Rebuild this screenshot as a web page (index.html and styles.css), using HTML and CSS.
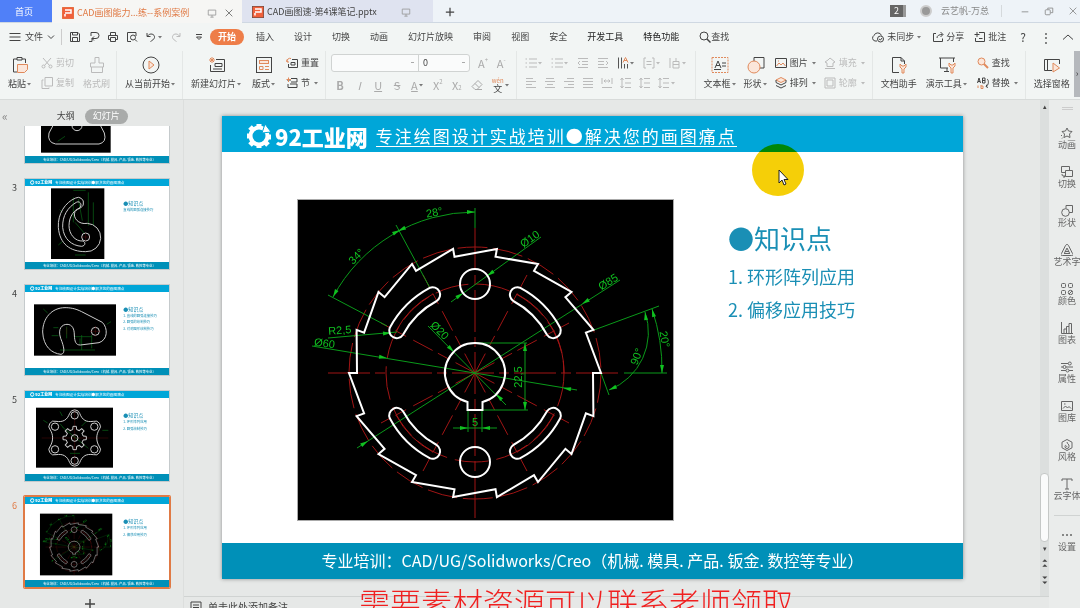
FILE: index.html
```html
<!DOCTYPE html>
<html lang="zh-CN">
<head>
  <meta charset="UTF-8">
  <meta name="viewport" content="width=device-width, initial-scale=1.0">
  <title>CAD画图能力训练</title>
  <link rel="stylesheet" href="styles.css">
</head>
<body>

<!-- icons and drawings -->
<svg class="sprite" aria-hidden="true">
  <symbol id="i-wps" viewBox="0 0 12 12"><rect width="12" height="12" rx="1" fill="#f0603c"/><path d="M3 9.500V7M3 3H9V6H3" fill="none" stroke="#fff" stroke-width="1.500"/></symbol>
  <symbol id="i-screen" viewBox="0 0 12 12"><path d="M1.500 2.500H10.500V8.500H1.500ZM6 8.500V11M4 11H8"/></symbol>
  <symbol id="i-close" viewBox="0 0 12 12"><path d="M2 2L10 10M10 2L2 10"/></symbol>
  <symbol id="i-plus" viewBox="0 0 12 12"><path d="M6 1V11M1 6H11" stroke-width="1.500"/></symbol>
  <symbol id="i-min" viewBox="0 0 12 12"><path d="M2 7H10"/></symbol>
  <symbol id="i-restore" viewBox="0 0 12 12"><rect x="1.500" y="4.500" width="6" height="6" rx="1"/><path d="M4.500 4V2.500H10.500V8H8"/></symbol>
  <symbol id="i-caret" viewBox="0 0 6 6"><path d="M1 2H5L3 4.500Z" fill="currentColor" stroke="none"/></symbol>
  <symbol id="i-down" viewBox="0 0 8 8"><path d="M1 2.500L4 5.500L7 2.500"/></symbol>
  <symbol id="i-up" viewBox="0 0 12 12"><path d="M1 8.500L6 4L11 8.500"/></symbol>
  <symbol id="i-menu" viewBox="0 0 12 12"><path d="M.5 2.500H11.500M.5 6H11.500M.5 9.500H11.500"/></symbol>
  <symbol id="i-save" viewBox="0 0 12 12"><path d="M1.500 1.500H9L10.500 3V10.500H1.500ZM3.500 10.500V6.500H8.500V10.500M3.500 1.500V4H8.500V1.500"/></symbol>
  <symbol id="i-export" viewBox="0 0 12 12"><path d="M3 1.500H8A3 3 0 0 1 8 7.500H4M6 5.500L4 7.500L6 9.500M3 1.500V5M1 10.500H4V7.500"/></symbol>
  <symbol id="i-print" viewBox="0 0 12 12"><path d="M3.500 4V1.500H8.500V4M3 8.500H1.500V4.500H10.500V8.500H9M3.500 6.500H8.500V10.500H3.500Z"/></symbol>
  <symbol id="i-preview" viewBox="0 0 12 12"><path d="M5 10.500H1.500V1.500H10V5"/><circle cx="7" cy="6.500" r="2.500"/><path d="M9 8.500L11 10.500"/></symbol>
  <symbol id="i-undo" viewBox="0 0 12 12"><path d="M2 2V5.500H5.500M2.500 5C5 1.500 10 3 9.500 6.500C9 8.500 7 9.500 5.500 10.500"/></symbol>
  <symbol id="i-redo" viewBox="0 0 12 12"><path d="M10 2V5.500H6.500M9.500 5C7 1.500 2 3 2.500 6.500C3 8.500 5 9.500 6.500 10.500"/></symbol>
  <symbol id="i-more" viewBox="0 0 8 8"><path d="M1 1.500H7M1.500 4H6.500L4 6.500Z"/></symbol>
  <symbol id="i-search" viewBox="0 0 12 12"><circle cx="5" cy="5" r="4"/><path d="M8 8L11.500 11.500" stroke-width="1.500"/></symbol>
  <symbol id="i-find" viewBox="0 0 12 12"><circle class="of" cx="4.500" cy="4.500" r="3.500"/><path class="o" d="M7 7L11 11" stroke-width="2"/></symbol>
  <symbol id="i-cloud" viewBox="0 0 14 12"><path d="M6 10H4A3 3 0 0 1 3 4.500A4 4 0 0 1 10.500 4.500"/><circle cx="9.500" cy="8" r="3"/><path d="M8 8L9.500 9L11 7"/></symbol>
  <symbol id="i-share" viewBox="0 0 12 12"><path d="M4 2.500H1.500V10.500H10.500V7.500M5 7C5 4.500 7 3.500 10.500 3.500M8.500 1L11 3.500L8.500 6"/></symbol>
  <symbol id="i-comment" viewBox="0 0 12 12"><path d="M5 1.500H10.500V10.500H1.500V7M3 1V6M.5 3.500H5.500M5 7.500H8.500"/></symbol>
  <symbol id="i-paste" viewBox="0 0 18 18"><path d="M6 16H2.500V3H6M11 3H14.500V7M6 1.500H11V4H6Z"/><path class="of" d="M6.500 8.500H16.500V13.500L13.500 16.500H6.500Z"/></symbol>
  <symbol id="i-cut" viewBox="0 0 12 12"><path d="M2 1L8.500 8.500M10 1L3.500 8.500"/><circle cx="2.500" cy="9.500" r="1.500"/><circle cx="9.500" cy="9.500" r="1.500"/></symbol>
  <symbol id="i-copy" viewBox="0 0 12 12"><path d="M4 .5H11.500V9H4ZM2.500 3H1V11.500H8V10.500"/></symbol>
  <symbol id="i-brush" viewBox="0 0 18 18"><path d="M7 1.500H11V7H15.500V11H2.500V7H7ZM3.500 11V16.500H14.500V11"/></symbol>
  <symbol id="i-play" viewBox="0 0 18 18"><circle cx="9" cy="9" r="8"/><path class="of" d="M7 5L12 9L7 13Z"/></symbol>
  <symbol id="i-newslide" viewBox="0 0 18 18"><path d="M8 3.500H16.500V15.500H2.500V9M5 13H14"/><path d="M7 7.500H14V10.500H7Z"/><path class="o" d="M4 1V7M1 4H7M2 2L6 6M6 2L2 6"/></symbol>
  <symbol id="i-layout" viewBox="0 0 18 18"><rect x="1.500" y="1.500" width="15" height="15"/><rect class="of" x="4.500" y="4.500" width="9" height="3"/><path class="o" d="M4.500 10.500H8V13.500H4.500ZM10 10.500H14M10 13.500H14"/></symbol>
  <symbol id="i-reset" viewBox="0 0 12 12"><path d="M6 2.500H11.500V10.500H2.500V7M5 5.500H9V8H5Z"/><path class="o" d="M1 5A3 3 0 0 1 5 1.500M1 2.500V5H3"/></symbol>
  <symbol id="i-section" viewBox="0 0 12 12"><path d="M5 1.500H11V5H5M2 7V10.500H11V7H4M5 3H1"/><path class="o" d="M2.500 .5V5M.5 2.500H5"/></symbol>
  <symbol id="i-eraser" viewBox="0 0 12 12"><path d="M7 1.500L11 5.500L6 10.500H4L1 7.500ZM4 4.500L8 8.500M6 10.500H11"/></symbol>
  <symbol id="i-bullets" viewBox="0 0 12 12"><path d="M4 2H12M4 6H12M4 10H12M.5 2H2M.5 6H2M.5 10H2"/></symbol>
  <symbol id="i-outdent" viewBox="0 0 12 12"><path d="M1 1.500H11M5 4.500H11M5 7.500H11M1 10.500H11M3 4L1 6L3 8"/></symbol>
  <symbol id="i-indent" viewBox="0 0 12 12"><path d="M1 1.500H11M1 4.500H7M1 7.500H7M1 10.500H11M9 4L11 6L9 8"/></symbol>
  <symbol id="i-textdir" viewBox="0 0 12 12"><path d="M1.500 .5V11.500M4.500 .5V11.500M7.500 7V11.500M10.500 7V11.500"/><path class="o" d="M6 5.500L8.500 .5L11 5.500M7 3.500H10"/></symbol>
  <symbol id="i-valign" viewBox="0 0 12 12"><path d="M3 1H1V11H3M9 1H11V11H9M3.500 4.500H8.500M3.500 7.500H8.500"/></symbol>
  <symbol id="i-smart" viewBox="0 0 12 12"><path d="M1 1V11M4 4.500H10V11H4ZM7 1V4M4 7.500H10"/></symbol>
  <symbol id="i-left" viewBox="0 0 12 12"><path d="M1 1.500H8M1 4.500H11M1 7.500H7M1 10.500H11"/></symbol>
  <symbol id="i-center" viewBox="0 0 12 12"><path d="M2 1.500H10M1 4.500H11M3 7.500H9M1 10.500H11"/></symbol>
  <symbol id="i-right" viewBox="0 0 12 12"><path d="M4 1.500H11M1 4.500H11M5 7.500H11M1 10.500H11"/></symbol>
  <symbol id="i-justify" viewBox="0 0 12 12"><path d="M1 1.500H11M1 4.500H11M1 7.500H11M1 10.500H11"/></symbol>
  <symbol id="i-spread" viewBox="0 0 12 12"><path d="M1 1V7M11 1V7M3 4H9M4.500 2.500L3 4L4.500 5.500M7.500 2.500L9 4L7.500 5.500M1 10.500H11"/></symbol>
  <symbol id="i-lines" viewBox="0 0 12 12"><path d="M5 1.500H11M5 6H11M5 10.500H11M2 1V11M.5 3L2 1L3.500 3M.5 9L2 11L3.500 9"/></symbol>
  <symbol id="i-textbox" viewBox="0 0 18 18"><rect class="o" x="1" y="1.500" width="16" height="15" stroke-dasharray="2 1"/><path d="M4 12L7 5L10 12M5 9.500H9M11 7H15M11 10H15M3 13.500H10"/></symbol>
  <symbol id="i-shape" viewBox="0 0 18 18"><path d="M7 6V1.500H17V12H13"/><circle class="of" cx="7" cy="11" r="6"/></symbol>
  <symbol id="i-picture" viewBox="0 0 12 12"><path d="M.5 1.500H11.500V10.500H.5Z"/><path class="o" d="M1.500 9L4 6L6 8L8 6L10.500 9M3 4H4"/></symbol>
  <symbol id="i-arrange" viewBox="0 0 12 12"><path class="of" d="M6 .5L11 3L6 5.500L1 3Z"/><path d="M1 5.500L6 8L11 5.500M1 8.500L6 11L11 8.500M1 3V5.500M11 3V5.500"/></symbol>
  <symbol id="i-fill" viewBox="0 0 12 12"><path d="M4 3L6 1L11 5L9 6V9.500H3V6L1 5ZM1 11.500H11"/></symbol>
  <symbol id="i-outline" viewBox="0 0 12 12"><path d="M1 1H11V11H1ZM3 3H9V9H3Z"/></symbol>
  <symbol id="i-dochelp" viewBox="0 0 18 18"><path d="M9 16.500H2.500V1.500H11L14.500 5V8M11 1.500V5H14.500"/><path class="of" d="M10 8V11L12 13V17H14V13L16 11V8L14 10H12Z"/></symbol>
  <symbol id="i-present" viewBox="0 0 18 18"><path d="M1 2H17M2.500 2V12H10M6 15.500H11M9 12V15"/><path d="M15.500 2V6"/><path class="of" d="M11 7V10L13 12V17H15V12L17 10V7L15 9H13Z"/></symbol>
  <symbol id="i-replace" viewBox="0 0 12 12"><path d="M.5 6L2 1L3.500 6M1 4.500H3M5.500 1V6H8V1H5.500M5.500 3.500H8M10 2C12 3 12 8 9 9.500M11 10.500L9 9.500L10 7.500"/><path class="o" d="M1 8.500V11M4 8V11.500H6V9H4"/></symbol>
  <symbol id="i-pane" viewBox="0 0 18 18"><path d="M9 14.500H1.500V3.500H16.500V8M4.500 3.500V14.500"/><path class="of" d="M10 7V16L16.500 12Z"/></symbol>
  <symbol id="i-star" viewBox="0 0 12 12"><path d="M6 1L7.500 4L11 4.500L8.500 7L9 10.500L6 9L3 10.500L3.500 7L1 4.500L4.500 4ZM1 8L0 9M2 10.500L1 11.500"/></symbol>
  <symbol id="i-switch" viewBox="0 0 12 12"><path d="M4 6.500H.5V.5H8.500V4M4.500 4.500H11.500V10.500H4.500ZM1 8C1 10 2 10.500 4 10.500M2.500 9L4 10.500L2.500 12"/></symbol>
  <symbol id="i-shapes" viewBox="0 0 12 12"><path d="M5 3.500V.5H11.500V7.500H8"/><circle cx="4.500" cy="7.500" r="3.800"/></symbol>
  <symbol id="i-wordart" viewBox="0 0 12 12"><path d="M6 .5Q7 .5 7.500 1.500L11.500 9.500A1 1 0 0 1 10.500 11.500H1.500A1 1 0 0 1 .5 9.500L4.500 1.500Q5 .5 6 .5ZM3 9.500H9M6 4L3.500 9M6 4L8.500 9M4 7.500H8"/></symbol>
  <symbol id="i-colors" viewBox="0 0 12 12"><rect x=".5" y=".5" width="4" height="4" rx="1"/><rect x="7.500" y=".5" width="4" height="4" rx="1"/><rect x=".5" y="7.500" width="4" height="4" rx="1"/><circle cx="9.500" cy="9.500" r="2.200"/><path d="M8 11L11 8"/></symbol>
  <symbol id="i-chart" viewBox="0 0 12 12"><path d="M.5 0V11.500H12M3 11V7H5.500V11M5.500 7V4.500H8V11M8 4.500V1.500H10.500V11"/></symbol>
  <symbol id="i-props" viewBox="0 0 12 12"><path d="M0 2.500H7M0 6H2M5 6H12M0 9.500H5M8 9.500H12"/><circle cx="8.800" cy="2.500" r="1.500"/><circle cx="3.500" cy="6" r="1.500"/><circle cx="6.500" cy="9.500" r="1.500"/></symbol>
  <symbol id="i-gallery" viewBox="0 0 12 12"><path d="M.5 1.500H11.500V10.500H.5ZM2 8.500L4.500 6L6.500 8L8 6.500L10 8.500M3 4H4.500"/></symbol>
  <symbol id="i-style" viewBox="0 0 12 12"><path d="M6 .5L11 3.200V8.800L6 11.500L1 8.800V3.200ZM6 3C6 5 8.500 5 8 7.500A2 2 0 0 1 4 7.500C4 6 5 6 6 8"/></symbol>
  <symbol id="i-type" viewBox="0 0 12 12"><path d="M1 3V1H11V3M6 1V11M4 11H8"/></symbol>
  <symbol id="i-dots" viewBox="0 0 12 12"><path d="M1 6H3M5 6H7M9 6H11" stroke-width="1.500"/></symbol>
  <symbol id="i-note" viewBox="0 0 12 12"><path d="M1 1H11V11H1ZM3 4H9M3 6.500H9M3 9H6"/></symbol>
  <symbol id="i-gear" viewBox="0 0 26 26"><circle cx="13" cy="13" r="8.500" fill="none" stroke="#fff" stroke-width="4"/><path d="M13 5V1M13 21V25M5 13H1M7 7L4 4M7 19L4 22M19 19L22 22M21 14H25" fill="none" stroke="#fff" stroke-width="5"/><path d="M16 10L19 1L25 9Z" fill="#fff" stroke="#00a6d8" stroke-width="1"/></symbol>

  <path id="slot" d="M45.300 -85.200A96.500 96.500 0 0 1 85.200 -45.300A7.500 7.500 0 0 1 72 -38.300A81.500 81.500 0 0 0 38.300 -72A7.500 7.500 0 0 1 45.300 -85.200Z"/>
  <path id="head" d="M0 0L-8 -2V2Z"/>
  <path id="tooth" d="M-10 -24L-6 -25L-5 -35H5L6 -25L10 -24"/>

  <!-- ratchet wheel, centre at 0,0 -->
  <symbol id="wheel" viewBox="-177 -173 375 320">
    <rect x="-177" y="-173" width="375" height="320" fill="#000"/>
    <g class="axis">
      <path d="M-147 0H147M0 -145V147" stroke-dasharray="42 5 10 5"/>
      <circle r="126" stroke-dasharray="30 6"/>
      <circle r="89" stroke-dasharray="34 8"/>
      <path d="M0 0L-52 -98M0 0L52 -98M0 0L-94 -50M0 0L94 -50M0 0L-52 98M0 0L52 98M0 0L-94 50M0 0L94 50" stroke-dasharray="22 8 12 6"/>
      <path d="M89 0A89 89 0 0 0 79 -42M-42 79A89 89 0 0 1 -79 42M42 79A89 89 0 0 0 79 42M-42 -79A89 89 0 0 0 -79 -42M42 -79A89 89 0 0 1 79 -42"/>
    </g>
    <g class="dim">
      <path d="M0 -165V-145M0 -161A161 161 0 0 0 -142 -76M-79 -148L-45 -85M-147 -78L-88 -47"/>
      <path d="M-147 -35L-78 -41M-163 -27L102 17M-24 -71L66 -136M-47 -47L31 32M-118 75L145 -93"/>
      <path d="M119 -43L184 -67M177 -64A188 188 0 0 1 187 0M170 -61A62 62 0 0 1 134 17M126 0L134 22M149 0H192"/>
      <path d="M0 -30H52M50 -30V37M8 37H53M-22 55H22M-7 38V59M7 38V59"/>
    </g>
    <g class="heads">
      <use href="#head" transform="translate(0 -161)"/>
      <use href="#head" transform="translate(-77 -142) rotate(155)"/>
      <use href="#head" transform="translate(-75 -143) rotate(-28)"/>
      <use href="#head" transform="translate(-142 -76) rotate(118)"/>
      <use href="#head" transform="translate(-84 -40) rotate(-4)"/>
      <use href="#head" transform="translate(-88 -15) rotate(9)"/>
      <use href="#head" transform="translate(88 15) rotate(189)"/>
      <use href="#head" transform="translate(-12 -80) rotate(-36)"/>
      <use href="#head" transform="translate(12 -97) rotate(144)"/>
      <use href="#head" transform="translate(-21 -21) rotate(45)"/>
      <use href="#head" transform="translate(21 21) rotate(225)"/>
      <use href="#head" transform="translate(107 -69) rotate(148)"/>
      <use href="#head" transform="translate(-107 68) rotate(-32)"/>
      <use href="#head" transform="translate(177 -64) rotate(-105)"/>
      <use href="#head" transform="translate(187 0) rotate(90)"/>
      <use href="#head" transform="translate(170 -61) rotate(-98)"/>
      <use href="#head" transform="translate(134 17) rotate(155)"/>
      <use href="#head" transform="translate(50 -30) rotate(-90)"/>
      <use href="#head" transform="translate(50 37) rotate(90)"/>
      <use href="#head" transform="translate(-7 55)"/>
      <use href="#head" transform="translate(7 55) rotate(180)"/>
    </g>
    <g class="dim-text">
      <text transform="translate(-40 -157) rotate(-10)">28°</text>
      <text transform="translate(-116 -114) rotate(-45)">34°</text>
      <text transform="translate(-135 -39) rotate(-4)">R2,5</text>
      <text transform="translate(-151 -26) rotate(8)">Ø60</text>
      <text transform="translate(57 -131) rotate(-36)">Ø10</text>
      <text transform="translate(-38 -40) rotate(45)">Ø20</text>
      <text transform="translate(135 -88) rotate(-32)">Ø85</text>
      <text transform="translate(186 -33) rotate(80)">20°</text>
      <text transform="translate(165 -15) rotate(-68)">90°</text>
      <text transform="translate(47 4) rotate(-90)">22,5</text>
      <text transform="translate(0 53)">5</text>
    </g>
    <g class="part">
      <polygon points="126,0 118,0 118.4,43.1 110.9,40.4 96.5,81 90.4,75.8 63,109.1 59,102.2 21.9,124.1 20.5,116.2 -21.9,124.1 -20.5,116.2 -63,109.1 -59,102.2 -96.5,81 -90.4,75.8 -118.4,43.1 -110.9,40.4 -126,0 -118,0 -118.4,-43.1 -110.9,-40.4 -96.5,-81 -90.4,-75.8 -63,-109.1 -59,-102.2 -21.9,-124.1 -20.5,-116.2 21.9,-124.1 20.5,-116.2 63,-109.1 59,-102.2 96.5,-81 90.4,-75.8 118.4,-43.1 110.9,-40.4"/>
      <circle cy="-89" r="15"/>
      <circle cy="89" r="15"/>
      <path d="M-7.500 29A30 30 0 1 1 7.500 29V37H-7.500Z"/>
      <use href="#slot"/>
      <use href="#slot" transform="scale(-1 1)"/>
      <use href="#slot" transform="scale(1 -1)"/>
      <use href="#slot" transform="scale(-1 -1)"/>
    </g>
  </symbol>

  <symbol id="frame" viewBox="0 0 432 270">
    <rect width="432" height="270" fill="#fff"/>
    <rect width="432" height="21" fill="#00a6d8"/>
    <rect y="249" width="432" height="21" fill="#0090b8"/>
    <svg x="14" y="3" width="15" height="15"><use href="#i-gear"/></svg>
    <g fill="#fff">
      <text x="31" y="15" font-size="12" font-weight="900">92工业网</text>
      <text x="90" y="15" font-size="11">专注绘图设计实战培训●解决您的画图痛点</text>
      <text x="54" y="263" font-size="10">专业培训：CAD/UG/Solidworks/Creo（机械. 模具. 产品. 钣金. 数控等专业）</text>
    </g>
    <text x="295" y="77" font-size="15" fill="#1a8fb5">●知识点</text>
  </symbol>
</svg>

<div class="app">
  <header class="titlebar">
    <button class="home">首页</button>
    <div class="tab active">
      <svg class="ico"><use href="#i-wps"/></svg>
      <span>CAD画图能力...练--系例案例</span>
      <svg class="ico s10 end"><use href="#i-screen"/></svg>
      <button class="plain" aria-label="关闭标签"><svg class="ico s10"><use href="#i-close"/></svg></button>
    </div>
    <div class="tab second">
      <svg class="ico"><use href="#i-wps"/></svg>
      <span>CAD画图速-第4课笔记.pptx</span>
      <svg class="ico s10 end"><use href="#i-screen"/></svg>
    </div>
    <button class="plain newtab" aria-label="新建"><svg class="ico s10"><use href="#i-plus"/></svg></button>
    <div class="account">
      <span class="count">2</span>
      <span class="avatar"></span>
      <span class="user">云艺帆-万总</span>
      <button class="plain" aria-label="最小化"><svg class="ico s10"><use href="#i-min"/></svg></button>
      <button class="plain" aria-label="还原"><svg class="ico s10"><use href="#i-restore"/></svg></button>
      <button class="plain" aria-label="关闭"><svg class="ico s10"><use href="#i-close"/></svg></button>
    </div>
  </header>

  <nav class="menubar">
    <button class="file"><svg class="ico"><use href="#i-menu"/></svg>文件<svg class="ico s8"><use href="#i-down"/></svg></button>
    <div class="quick">
      <button aria-label="保存"><svg class="ico"><use href="#i-save"/></svg></button>
      <button aria-label="输出"><svg class="ico"><use href="#i-export"/></svg></button>
      <button aria-label="打印"><svg class="ico"><use href="#i-print"/></svg></button>
      <button aria-label="预览"><svg class="ico"><use href="#i-preview"/></svg></button>
      <button aria-label="撤销"><svg class="ico"><use href="#i-undo"/></svg><svg class="caret"><use href="#i-caret"/></svg></button>
      <button aria-label="恢复" class="off"><svg class="ico"><use href="#i-redo"/></svg></button>
      <button aria-label="更多"><svg class="ico s8"><use href="#i-more"/></svg></button>
    </div>
    <div class="menus">
      <button class="current">开始</button>
      <button>插入</button>
      <button>设计</button>
      <button>切换</button>
      <button>动画</button>
      <button>幻灯片放映</button>
      <button>审阅</button>
      <button>视图</button>
      <button>安全</button>
      <button class="dark">开发工具</button>
      <button class="dark">特色功能</button>
      <button class="search"><svg class="ico"><use href="#i-search"/></svg>查找</button>
    </div>
    <div class="menu-right">
      <button><svg class="ico w14"><use href="#i-cloud"/></svg>未同步<svg class="caret"><use href="#i-caret"/></svg></button>
      <button><svg class="ico"><use href="#i-share"/></svg>分享</button>
      <button><svg class="ico"><use href="#i-comment"/></svg>批注</button>
      <button class="help">?</button>
      <button class="help">⋮</button>
      <button aria-label="收起"><svg class="ico"><use href="#i-up"/></svg></button>
    </div>
  </nav>

  <section class="ribbon">
    <div class="group">
      <button class="big"><svg class="ico s18"><use href="#i-paste"/></svg><span>粘贴<svg class="caret"><use href="#i-caret"/></svg></span></button>
      <div class="stack off">
        <button><svg class="ico"><use href="#i-cut"/></svg>剪切</button>
        <button><svg class="ico"><use href="#i-copy"/></svg>复制</button>
      </div>
      <button class="big off"><svg class="ico s18"><use href="#i-brush"/></svg><span>格式刷</span></button>
    </div>
    <div class="group">
      <button class="big"><svg class="ico s18"><use href="#i-play"/></svg><span>从当前开始<svg class="caret"><use href="#i-caret"/></svg></span></button>
    </div>
    <div class="group slides">
      <button class="big"><svg class="ico s18"><use href="#i-newslide"/></svg><span>新建幻灯片<svg class="caret"><use href="#i-caret"/></svg></span></button>
      <button class="big"><svg class="ico s18"><use href="#i-layout"/></svg><span>版式<svg class="caret"><use href="#i-caret"/></svg></span></button>
      <div class="stack">
        <button><svg class="ico"><use href="#i-reset"/></svg>重置</button>
        <button><svg class="ico"><use href="#i-section"/></svg>节<svg class="caret"><use href="#i-caret"/></svg></button>
      </div>
    </div>
    <div class="group font">
      <div class="row">
        <div class="combo"><select class="name" aria-label="字体"><option></option></select><select class="size" aria-label="字号"><option>0</option></select></div>
        <button class="glyph">A<sup>+</sup></button>
        <button class="glyph">A<sup>-</sup></button>
      </div>
      <div class="row format">
        <button class="glyph"><b>B</b></button>
        <button class="glyph"><i>I</i></button>
        <button class="glyph"><u>U</u></button>
        <button class="glyph"><s>S</s></button>
        <button class="glyph"><u>A</u><svg class="caret"><use href="#i-caret"/></svg></button>
        <button class="glyph">X<sup>2</sup></button>
        <button class="glyph">X<sub>2</sub></button>
        <button class="glyph" aria-label="清除格式"><svg class="ico"><use href="#i-eraser"/></svg></button>
        <button class="pinyin"><span><em>wén</em>文</span><svg class="caret"><use href="#i-caret"/></svg></button>
      </div>
    </div>
    <div class="group para">
      <div class="row lists off">
        <button aria-label="项目符号"><svg class="ico"><use href="#i-bullets"/></svg><svg class="caret"><use href="#i-caret"/></svg></button>
        <button aria-label="编号"><svg class="ico"><use href="#i-bullets"/></svg><svg class="caret"><use href="#i-caret"/></svg></button>
        <button aria-label="减少缩进"><svg class="ico"><use href="#i-outdent"/></svg></button>
        <button aria-label="增加缩进"><svg class="ico"><use href="#i-indent"/></svg></button>
        <button aria-label="文字方向" class="on"><svg class="ico"><use href="#i-textdir"/></svg><svg class="caret"><use href="#i-caret"/></svg></button>
        <button aria-label="对齐文本"><svg class="ico"><use href="#i-valign"/></svg><svg class="caret"><use href="#i-caret"/></svg></button>
        <button aria-label="转智能图形"><svg class="ico"><use href="#i-smart"/></svg><svg class="caret"><use href="#i-caret"/></svg></button>
      </div>
      <div class="row off">
        <button aria-label="左对齐"><svg class="ico"><use href="#i-left"/></svg></button>
        <button aria-label="居中"><svg class="ico"><use href="#i-center"/></svg></button>
        <button aria-label="右对齐"><svg class="ico"><use href="#i-right"/></svg></button>
        <button aria-label="两端对齐"><svg class="ico"><use href="#i-justify"/></svg></button>
        <button aria-label="分散对齐"><svg class="ico"><use href="#i-spread"/></svg></button>
        <button aria-label="段前间距"><svg class="ico"><use href="#i-lines"/></svg></button>
        <button aria-label="段后间距"><svg class="ico"><use href="#i-lines"/></svg></button>
        <button aria-label="行距"><svg class="ico"><use href="#i-lines"/></svg><svg class="caret"><use href="#i-caret"/></svg></button>
      </div>
    </div>
    <div class="group insert">
      <button class="big"><svg class="ico s18"><use href="#i-textbox"/></svg><span>文本框<svg class="caret"><use href="#i-caret"/></svg></span></button>
      <button class="big"><svg class="ico s18"><use href="#i-shape"/></svg><span>形状<svg class="caret"><use href="#i-caret"/></svg></span></button>
      <div class="stack">
        <button><svg class="ico"><use href="#i-picture"/></svg>图片<svg class="caret"><use href="#i-caret"/></svg></button>
        <button><svg class="ico"><use href="#i-arrange"/></svg>排列<svg class="caret"><use href="#i-caret"/></svg></button>
      </div>
      <div class="stack off">
        <button><svg class="ico"><use href="#i-fill"/></svg>填充<svg class="caret"><use href="#i-caret"/></svg></button>
        <button><svg class="ico"><use href="#i-outline"/></svg>轮廓<svg class="caret"><use href="#i-caret"/></svg></button>
      </div>
    </div>
    <div class="group">
      <button class="big"><svg class="ico s18"><use href="#i-dochelp"/></svg><span>文档助手</span></button>
      <button class="big"><svg class="ico s18"><use href="#i-present"/></svg><span>演示工具<svg class="caret"><use href="#i-caret"/></svg></span></button>
      <div class="stack">
        <button><svg class="ico"><use href="#i-find"/></svg>查找</button>
        <button><svg class="ico"><use href="#i-replace"/></svg>替换<svg class="caret"><use href="#i-caret"/></svg></button>
      </div>
    </div>
    <div class="group last">
      <button class="big"><svg class="ico s18"><use href="#i-pane"/></svg><span>选择窗格</span></button>
    </div>
    <button class="scroll-right" aria-label="更多">›</button>
  </section>

  <main class="workspace">
    <aside class="outline">
      <div class="outline-tabs">
        <button class="fold">«</button>
        <button>大纲</button>
        <button class="pill">幻灯片</button>
      </div>
      <div class="outline-body">
        <ol class="thumbs">
          <li>
            <span class="num"></span>
            <svg class="thumb" viewBox="0 0 432 270">
              <rect width="432" height="270" fill="#fff"/>
              <rect y="249" width="432" height="21" fill="#0090b8"/>
              <rect x="48" y="32" width="209" height="207"/>
              <g class="mini"><path d="M136 60A22 22 0 0 1 176 60L238 180Q246 208 222 213H92Q66 208 72 180Z"/><circle cx="156" cy="158" r="15"/></g>
              <path class="mini-dim" d="M98 205L120 190M60 150L80 100"/>
              <text x="54" y="263" font-size="10" fill="#fff">专业培训：CAD/UG/Solidworks/Creo（机械. 模具. 产品. 钣金. 数控等专业）</text>
            </svg>
          </li>
          <li>
            <span class="num">3</span>
            <svg class="thumb" viewBox="0 0 432 270">
              <use href="#frame"/>
              <rect x="78" y="28" width="160" height="212"/>
              <path class="mini-dim" d="M145 34H182M190 40V140M145 55V130M160 60L172 125M100 198L112 188M150 228H182M150 130L180 165M112 100L104 92M205 70V140"/>
              <g class="mini">
                <path d="M175 75A16 16 0 0 0 152 57C120 70 98 105 100 145C104 195 135 218 182 218A42 42 0 0 0 187 133C160 138 142 115 150 98C158 88 175 86 175 75Z"/>
                <path d="M168 78A9 9 0 0 0 154 70C128 85 112 110 113 145C116 180 140 200 170 202C182 200 182 190 174 186C150 188 132 165 132 140C132 110 150 92 162 88Q168 85 168 78Z"/>
                <circle cx="182" cy="174" r="12"/>
              </g>
              <path class="mini-red" d="M170 174H194M182 162V186"/>
              <text class="point" x="295" y="97">直线的圆弧连接技巧</text>
            </svg>
          </li>
          <li>
            <span class="num">4</span>
            <svg class="thumb" viewBox="0 0 432 270">
              <use href="#frame"/>
              <rect x="27" y="58" width="246" height="154"/>
              <path class="mini-dim" d="M55 72L68 84M245 118L258 110M85 128H100M80 152H100M105 195H210M170 150V195M150 155H200M165 178V160M200 150V190M125 125V160"/>
              <g class="mini">
                <path d="M120 68C80 68 53 100 53 141C55 185 80 205 108 208C122 206 117 185 107 160C97 130 112 118 126 118C142 118 148 132 148 150C149 170 152 180 166 180L222 173C248 165 250 130 232 112L170 80C150 70 135 68 120 68Z"/>
                <circle cx="211" cy="139" r="12"/>
              </g>
              <path class="mini-red" d="M195 139H227M211 123V155M125 128V148"/>
              <text class="point" x="295" y="96">1. 直线的圆弧连接技巧</text>
              <text class="point" x="295" y="115">2. 圆弧的绘制技巧</text>
              <text class="point" x="295" y="135">3. 对称图形绘制技巧</text>
            </svg>
          </li>
          <li>
            <span class="num">5</span>
            <svg class="thumb" viewBox="0 0 432 270">
              <use href="#frame"/>
              <rect x="33" y="50" width="231" height="180"/>
              <path class="mini-red" d="M50 141H250M149 55V225"/>
              <path class="mini-dim" d="M55 88L68 96M105 62L112 75M232 118H250M112 108L190 172M105 98L115 110M170 105L185 90M135 187H165"/>
              <g class="mini">
                <path d="M134 67A16 16 0 0 1 164 67C172 88 184 94 205 91A16 16 0 0 1 222 117C213 131 213 150 222 165A16 16 0 0 1 205 191C184 188 172 194 164 215A16 16 0 0 1 134 215C126 194 114 188 93 191A16 16 0 0 1 76 165C85 150 85 131 76 117A16 16 0 0 1 93 91C114 94 126 88 134 67Z"/>
                <circle cx="149" cy="73" r="11"/><circle cx="208" cy="107" r="11"/><circle cx="208" cy="175" r="11"/>
                <circle cx="149" cy="209" r="11"/><circle cx="90" cy="175" r="11"/><circle cx="90" cy="107" r="11"/>
                <circle cx="149" cy="141" r="10"/>
                <g transform="translate(149 141)">
                  <use href="#tooth"/><use href="#tooth" transform="rotate(45)"/><use href="#tooth" transform="rotate(90)"/><use href="#tooth" transform="rotate(135)"/>
                  <use href="#tooth" transform="rotate(180)"/><use href="#tooth" transform="rotate(225)"/><use href="#tooth" transform="rotate(270)"/><use href="#tooth" transform="rotate(315)"/>
                </g>
              </g>
              <text class="point" x="295" y="97">1. 环形阵列应用</text>
              <text class="point" x="295" y="117">2. 圆弧绘制技巧</text>
            </svg>
          </li>
          <li class="selected">
            <span class="num">6</span>
            <svg class="thumb" viewBox="0 0 432 270">
              <use href="#frame"/>
              <svg x="44" y="49" width="219" height="187"><use href="#wheel"/></svg>
              <text class="point" x="295" y="97">1. 环形阵列应用</text>
              <text class="point" x="295" y="117">2. 偏移应用技巧</text>
            </svg>
          </li>
        </ol>
        <div class="outline-scroll"></div>
      </div>
      <button class="add" aria-label="新建幻灯片"><svg class="ico"><use href="#i-plus"/></svg></button>
    </aside>

    <div class="center">
      <div class="stage">
        <article class="slide">
          <header class="slide-head">
            <svg class="gear"><use href="#i-gear"/></svg>
            <span class="brand">92工业网</span>
            <span class="slogan">专注绘图设计实战培训●解决您的画图痛点</span>
          </header>
          <div class="slide-body">
            <svg class="drawing" viewBox="0 0 375 320"><use href="#wheel"/></svg>
            <div class="points">
              <h1>●知识点</h1>
              <p>1. 环形阵列应用</p>
              <p>2. 偏移应用技巧</p>
            </div>
          </div>
          <footer class="slide-foot">专业培训：CAD/UG/Solidworks/Creo（机械. 模具. 产品. 钣金. 数控等专业）</footer>
        </article>
        <div class="vscroll">
          <span>▴</span>
          <i></i>
          <span>▾</span>
          <span>⏶<br>⏶</span>
          <span>⏷<br>⏷</span>
        </div>
      </div>
      <div class="notes"><svg class="ico"><use href="#i-note"/></svg>单击此处添加备注</div>
    </div>

    <aside class="tools">
      <div class="grip"></div>
      <button><svg class="ico"><use href="#i-star"/></svg>动画</button>
      <button><svg class="ico"><use href="#i-switch"/></svg>切换</button>
      <button><svg class="ico"><use href="#i-shapes"/></svg>形状</button>
      <button><svg class="ico"><use href="#i-wordart"/></svg>艺术字</button>
      <button><svg class="ico"><use href="#i-colors"/></svg>颜色</button>
      <button><svg class="ico"><use href="#i-chart"/></svg>图表</button>
      <button><svg class="ico"><use href="#i-props"/></svg>属性</button>
      <button><svg class="ico"><use href="#i-gallery"/></svg>图库</button>
      <button><svg class="ico"><use href="#i-style"/></svg>风格</button>
      <button><svg class="ico"><use href="#i-type"/></svg>云字体</button>
      <hr>
      <button><svg class="ico"><use href="#i-dots"/></svg>设置</button>
    </aside>
  </main>

  <div class="pointer">
    <svg viewBox="0 0 52 52"><circle cx="26" cy="26" r="26" fill="#f5cf08"/><path d="M27 26V39L30 36L32 41L34 40L32 35.500H36Z" fill="#fff" stroke="#222"/></svg>
  </div>
  <div class="caption">需要素材资源可以联系老师领取</div>
</div>

</body>
</html>
```

FILE: styles.css
```css
* {
  box-sizing: border-box;
}

body {
  margin: 0;
  font-family: "Noto Sans CJK SC", sans-serif;
  font-size: 9px;
  line-height: 12px;
  color: #444;
}

button {
  display: flex;
  align-items: center;
  flex: none;
  padding: 0;
  border: 0;
  background: none;
  font: inherit;
  color: inherit;
  white-space: nowrap;
}

.sprite {
  display: none;
}

.app {
  position: relative;
  display: flex;
  flex-direction: column;
  height: 100vh;
  overflow: hidden;
  background: #e6e8e7;
}

.ico {
  flex: none;
  width: 12px;
  height: 12px;
  fill: none;
  stroke: currentColor;
}

.s8 { width: 8px; height: 8px; }
.s10 { width: 10px; height: 10px; }
.s18 { width: 18px; height: 18px; }
.w14 { width: 14px; }

.o { stroke: #e08a5c; }
.of { stroke: #e08a5c; fill: #fbe6da; }

.caret {
  flex: none;
  width: 6px;
  height: 6px;
  color: #777;
}

.off { color: #bbb; }
.off .caret { color: #bbb; }
.off .on { color: #555; }
.off .on .caret { color: #777; }

/* title bar */
.titlebar {
  display: flex;
  flex: none;
  height: 23px;
  border-bottom: 1px solid #cfd8e2;
  background: #eef3f8;
}

.home {
  justify-content: center;
  width: 52px;
  padding: 2px 4px 0 0;
  background: #5080f8;
  color: #fff;
}

.tab {
  display: flex;
  align-items: center;
  gap: 3px;
  height: 23px;
  padding: 2px 8px 0 10px;
}

.tab .end {
  margin-left: auto;
  color: #999;
}

.tab.active {
  width: 190px;
  background: #f6f6f4;
  color: #e07a45;
}

.tab.active .plain {
  margin-left: 4px;
  color: #666;
}

.tab.second {
  width: 191px;
  height: 22px;
  padding-right: 22px;
  background: #dfe3f0;
}

.newtab {
  margin-left: 12px;
  padding-top: 2px;
}

.account {
  display: flex;
  align-items: center;
  gap: 14px;
  margin-left: auto;
  padding-right: 2px;
  color: #888;
}

.count {
  width: 16px;
  border-right: 3px solid #999;
  background: #666;
  color: #fff;
  text-align: center;
}

.avatar {
  width: 12px;
  height: 12px;
  margin-right: -5px;
  border: 2px solid #ccc;
  border-radius: 50%;
  background: #999;
}

.user {
  padding-right: 12px;
  border-right: 1px solid #d5d9dc;
  margin-right: 4px;
}

/* menu row */
.menubar {
  display: flex;
  align-items: center;
  flex: none;
  height: 28px;
  padding: 0 6px 0 9px;
  background: #f2f5f4;
}

.file {
  gap: 4px;
  height: 16px;
  padding-right: 6px;
  border-right: 1px solid #ccc;
}

.quick {
  display: flex;
  align-items: center;
  gap: 7px;
  margin-left: 7px;
}

.quick button:last-child {
  margin-left: 6px;
}

.menus {
  display: flex;
  align-items: center;
  gap: 20px;
  margin-left: 7px;
}

.menus .current {
  height: 16px;
  margin-right: -8px;
  padding: 0 8px;
  border-radius: 8px;
  background: #ee7d48;
  color: #fff;
  font-weight: bold;
}

.menus .dark {
  color: #222;
}

.menu-right {
  display: flex;
  align-items: center;
  gap: 10px;
  margin-left: auto;
}

.menu-right button {
  gap: 2px;
}

.menu-right .help {
  margin-left: 4px;
  font-size: 12px;
}

/* ribbon */
.ribbon {
  display: flex;
  flex: none;
  height: 49px;
  border-bottom: 1px solid #d8dbda;
  background: #f2f5f4;
}

.group {
  display: flex;
  align-items: center;
  flex: none;
  gap: 9px;
  padding: 0 6px 4px 8px;
  border-right: 1px solid #e4e7e6;
}

.group.slides {
  gap: 10px;
}

.group.insert {
  gap: 7px;
}

.group.last {
  padding-right: 0;
  border-right: 0;
}

.big {
  flex-direction: column;
  gap: 4px;
}

.big span {
  display: flex;
  align-items: center;
}

.stack {
  display: flex;
  flex-direction: column;
  gap: 8px;
}

.stack button {
  gap: 3px;
}

.font,
.para {
  flex-direction: column;
  align-items: flex-start;
  justify-content: center;
  gap: 5px;
}

.group.font {
  gap: 5px;
  padding-left: 5px;
}

.group.para {
  gap: 5px;
  padding-right: 8px;
}

.row {
  display: flex;
  align-items: center;
  gap: 8px;
}

.para .row {
  gap: 7px;
  height: 15px;
}

.para .lists {
  gap: 8px;
}

.combo {
  display: flex;
  height: 18px;
  border: 1px solid #d0d3d2;
  border-radius: 3px;
  background: #fafbfb;
}

.combo select {
  appearance: none;
  padding: 0 4px;
  border: 0;
  background: linear-gradient(#aaa, #aaa) no-repeat right 4px center / 3px 1px;
  font: inherit;
  color: inherit;
}

.combo .name {
  width: 87px;
  border-right: 1px solid #d0d3d2;
}

.combo .size {
  width: 50px;
}

.format {
  gap: 9px;
  padding-left: 4px;
}

.glyph {
  justify-content: center;
  min-width: 10px;
  font-size: 11px;
  color: #aaa;
}

.glyph sup,
.glyph sub {
  font-size: 6px;
  line-height: 6px;
}

.glyph sup { align-self: flex-start; }
.glyph sub { align-self: flex-end; }

.pinyin span {
  display: flex;
  flex-direction: column;
  align-items: center;
  line-height: 8px;
}

.pinyin em {
  font-size: 6px;
  font-style: normal;
  color: #e08a5c;
}

.scroll-right {
  justify-content: center;
  width: 6px;
  height: 46px;
  margin-left: auto;
  background: #b5b8bc;
}

/* outline panel */
.workspace {
  display: flex;
  flex: 1;
  min-height: 0;
}

.outline {
  display: flex;
  flex-direction: column;
  flex: none;
  width: 184px;
  border-right: 1px solid #dcdedd;
}

.outline-tabs {
  display: flex;
  align-items: center;
  gap: 10px;
  height: 26px;
  padding: 6px 0 0 2px;
}

.outline-tabs .fold {
  margin-right: 39px;
  font-size: 12px;
  color: #888;
}

.outline-tabs .pill {
  height: 15px;
  padding: 0 8px;
  border-radius: 8px;
  background: #a9abaa;
  color: #fff;
}

.outline-body {
  position: relative;
  display: flex;
  flex: 1;
  min-height: 0;
  overflow: hidden;
}

.thumbs {
  display: flex;
  flex: 1;
  flex-direction: column;
  justify-content: flex-end;
  gap: 14px;
  margin: 0;
  padding: 0 13px 6px 12px;
  list-style: none;
}

.thumbs li {
  display: flex;
  flex: none;
  gap: 6px;
}

.num {
  width: 6px;
  padding-top: 4px;
}

.thumb {
  width: 146px;
  border: 1px solid #c5cacc;
}

.thumb text {
  font-family: "Noto Sans CJK SC", sans-serif;
}

.thumb .point {
  font-size: 10px;
  fill: #1a8fb5;
}

.selected .num {
  color: #e07a45;
}

.selected .thumb {
  border-color: #e07a45;
  border-radius: 1px;
  box-shadow: 0 0 0 1px #e07a45;
}

.mini {
  fill: none;
  stroke: #ccc;
  stroke-width: 3;
}

.mini-dim {
  fill: none;
  stroke: #0a6a18;
  stroke-width: 2;
}

.mini-red {
  fill: none;
  stroke: #7a1010;
}

.outline-scroll {
  width: 6px;
  margin: 127px 2px 1px 0;
  border-radius: 3px;
  background: #a9abaa;
}

.add {
  justify-content: center;
  height: 14px;
  padding: 6px 4px 0 0;
  overflow: hidden;
}

/* slide */
.center {
  display: flex;
  flex: 1;
  flex-direction: column;
  min-width: 0;
}

.stage {
  display: flex;
  flex: 1;
  min-height: 0;
}

.slide {
  display: flex;
  flex: 1;
  flex-direction: column;
  margin: 16px 77px 17px 38px;
  background: #fff;
  box-shadow: 0 0 4px rgba(0, 0, 0, 0.4);
}

.slide-head {
  display: flex;
  align-items: center;
  flex: none;
  height: 36px;
  padding: 4px 24px 0;
  background: #00a6d8;
  color: #fff;
}

.gear {
  width: 26px;
  height: 26px;
}

.brand {
  margin: 0 8px 0 3px;
  font-size: 22px;
  font-weight: 900;
  line-height: 24px;
}

.slogan {
  border-bottom: 1px solid #fff;
  font-size: 17px;
  line-height: 21px;
  letter-spacing: 2px;
}

.slide-body {
  display: flex;
  flex: 1;
  gap: 55px;
  padding: 48px 76px 0;
}

.drawing {
  flex: none;
  width: 375px;
  height: 320px;
  outline: 1px solid #aaa;
}

.axis {
  fill: none;
  stroke: #a01515;
}

.dim {
  fill: none;
  stroke: #0a9a1a;
}

.heads {
  fill: #10c020;
}

.dim-text {
  font-family: "Liberation Sans", Arial, sans-serif;
  font-size: 11px;
  fill: #10c020;
  text-anchor: middle;
}

.part {
  fill: none;
  stroke: #fff;
  stroke-width: 2;
}

.points {
  padding-top: 22px;
  color: #1a8fb5;
  white-space: nowrap;
}

.points h1 {
  margin: 0 0 6px;
  font-size: 26px;
  font-weight: normal;
  line-height: 32px;
}

.points p {
  margin: 0;
  font-size: 18px;
  line-height: 33px;
}

.slide-foot {
  flex: none;
  height: 36px;
  background: #0090b8;
  color: #fff;
  font-size: 16px;
  line-height: 34px;
  text-align: center;
}

.vscroll {
  display: flex;
  flex-direction: column;
  justify-content: flex-end;
  width: 9px;
  padding-bottom: 8px;
  background: #dcdfde;
  font-size: 7px;
  line-height: 5px;
  text-align: center;
}

.vscroll span {
  padding: 4px 0 3px;
}

.vscroll span:first-child {
  margin-bottom: auto;
}

.vscroll i {
  height: 69px;
  border: 1px solid #c5c8c7;
  border-radius: 4px;
  background: #fafbfb;
}

.notes {
  display: flex;
  gap: 6px;
  height: 12px;
  padding: 4px 6px 0;
  border-top: 1px solid #d0d3d2;
  overflow: hidden;
  font-size: 10px;
}

/* task icons */
.tools {
  display: flex;
  flex-direction: column;
  align-items: center;
  flex: none;
  width: 31px;
  padding-left: 5px;
  background: #eaeceb;
  color: #666;
}

.grip {
  width: 11px;
  height: 3px;
  margin: 7px 0 17px;
  border: solid #ccc;
  border-width: 1px 0;
}

.tools button {
  flex-direction: column;
  height: 39px;
}

.tools hr {
  width: 26px;
  margin: -2px 0 13px;
  border: 0;
  border-top: 1px solid #d0d3d2;
}

/* screen overlays */
.pointer {
  position: absolute;
  top: 144px;
  left: 752px;
  width: 52px;
  height: 52px;
  mix-blend-mode: multiply;
}

.caption {
  position: absolute;
  bottom: -14px;
  left: 359px;
  color: #f02020;
  font-size: 31px;
  font-weight: 300;
  line-height: 40px;
  white-space: nowrap;
}
```
